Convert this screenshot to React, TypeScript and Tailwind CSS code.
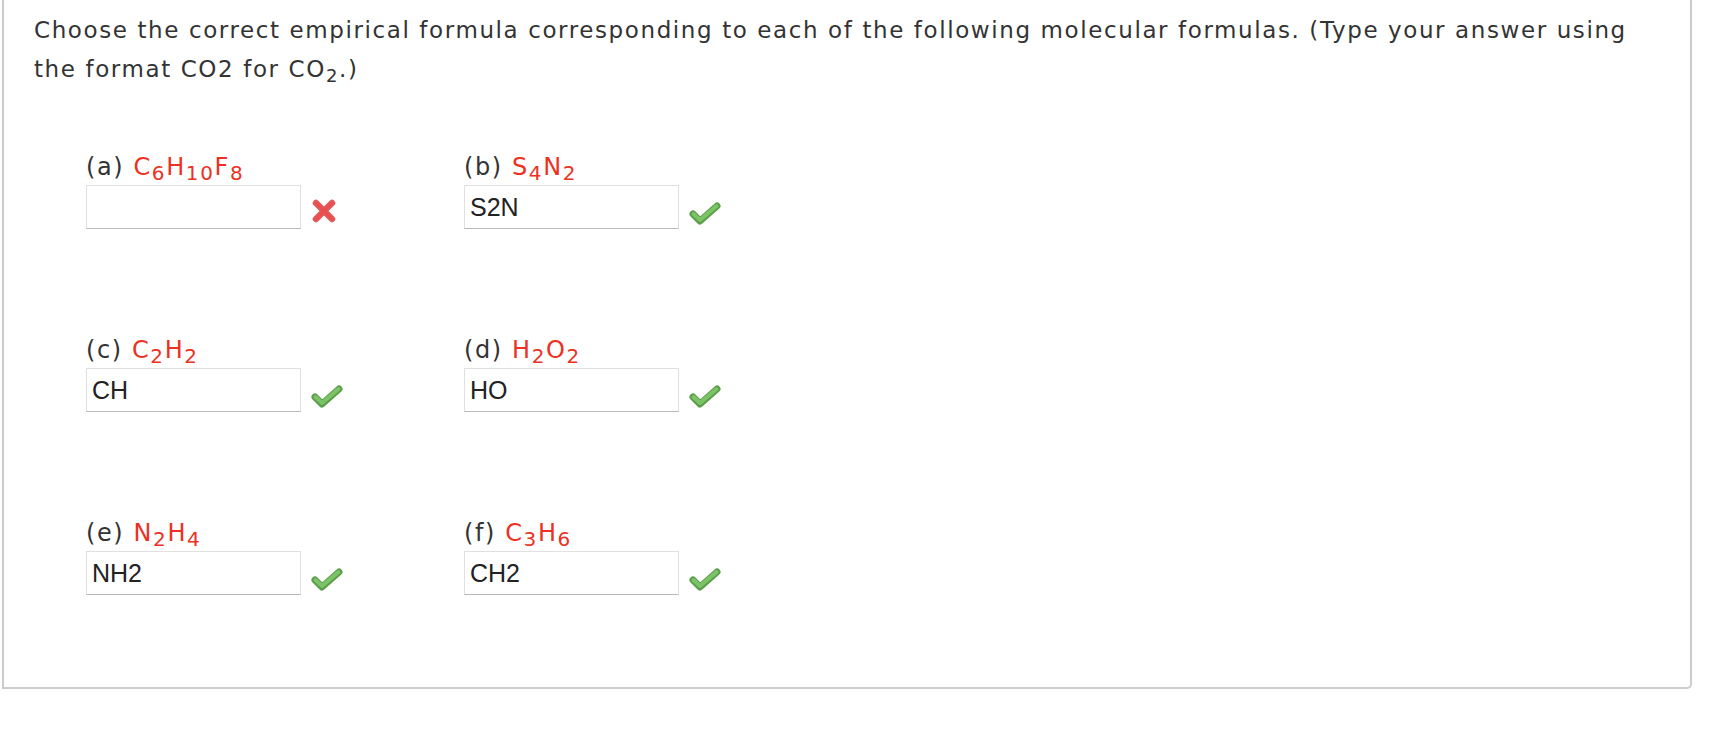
import { ReactNode } from 'react'

const verdana = "font-['DejaVu_Sans',Verdana,sans-serif]"
const arial = "font-['Liberation_Sans',Arial,sans-serif]"

function Formula({ parts }: { parts: [string, string?][] }) {
  return (
    <span className="text-[#ec3124]">
      {parts.map(([el, n], i) => (
        <span key={i}>
          {el}
          {n && <sub className="text-[20px] -bottom-[5px]">{n}</sub>}
        </span>
      ))}
    </span>
  )
}

function WrongIcon() {
  return (
    <svg width="26" height="26" viewBox="0 0 26 26" className="mb-[5px] blur-[0.4px]">
      <path d="M5 5 L21 21 M21 5 L5 21" stroke="#e35a5a" strokeWidth="6.5" strokeLinecap="round" />
      <path d="M5 5 L21 21 M21 5 L5 21" stroke="#ea4e4e" strokeWidth="3" strokeLinecap="round" />
    </svg>
  )
}

function RightIcon() {
  return (
    <svg width="32" height="26" viewBox="0 0 32 26" className="mb-[3px] blur-[0.4px]">
      <path d="M4 14 L11 21 L28 6" fill="none" stroke="#5a9e4a" strokeWidth="7" strokeLinecap="round" strokeLinejoin="round" />
      <path d="M4.5 14 L11 20 L27.5 6" fill="none" stroke="#7cc266" strokeWidth="4" strokeLinecap="round" strokeLinejoin="round" />
    </svg>
  )
}

function Part({ letter, formula, answer, correct }: { letter: string; formula: ReactNode; answer: string; correct: boolean }) {
  return (
    <div className="w-[378px]">
      <div className={`${verdana} text-[24px] leading-[20px] tracking-[1.6px] text-[#333]`}>
        ({letter}) {formula}
      </div>
      <div className="mt-[8px] flex items-end gap-[10px]">
        <div
          className={`${arial} w-[215px] h-[44px] border border-[#e0e0e0] border-b-[#b9b9b9] bg-white px-[5px] text-[25px] leading-[42px] text-[#222]`}
        >
          {answer}
        </div>
        {correct ? <RightIcon /> : <WrongIcon />}
      </div>
    </div>
  )
}

export default function App() {
  const rows = [
    [
      { letter: 'a', formula: <Formula parts={[['C', '6'], ['H', '10'], ['F', '8']]} />, answer: '', correct: false },
      { letter: 'b', formula: <Formula parts={[['S', '4'], ['N', '2']]} />, answer: 'S2N', correct: true },
    ],
    [
      { letter: 'c', formula: <Formula parts={[['C', '2'], ['H', '2']]} />, answer: 'CH', correct: true },
      { letter: 'd', formula: <Formula parts={[['H', '2'], ['O', '2']]} />, answer: 'HO', correct: true },
    ],
    [
      { letter: 'e', formula: <Formula parts={[['N', '2'], ['H', '4']]} />, answer: 'NH2', correct: true },
      { letter: 'f', formula: <Formula parts={[['C', '3'], ['H', '6']]} />, answer: 'CH2', correct: true },
    ],
  ]

  return (
    <div className="min-h-screen bg-white">
      <div className="ml-[2px] w-[1690px] border-2 border-t-0 border-[#cccccc] rounded-br-[5px] pl-[30px] pr-[40px] pt-[11px] pb-[92px]">
        <p className={`${verdana} text-[23px] leading-[39px] tracking-[1.6px] text-[#333]`}>
          Choose the correct empirical formula corresponding to each of the following molecular formulas. (Type
          your answer using the format CO2 for CO<sub className="text-[18px] -bottom-[5px]">2</sub>.)
        </p>
        <div className="mt-[68px] pl-[52px] flex flex-col gap-[111px]">
          {rows.map((row, i) => (
            <div key={i} className="flex">
              {row.map((p) => (
                <Part key={p.letter} {...p} />
              ))}
            </div>
          ))}
        </div>
      </div>
    </div>
  )
}
